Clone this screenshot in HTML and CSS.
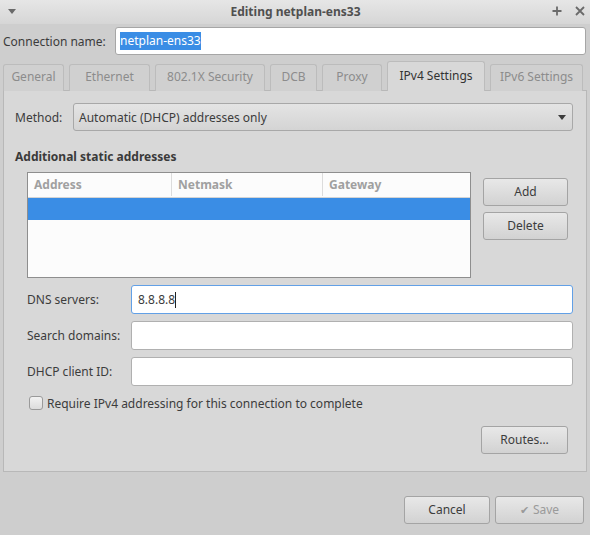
FILE: index.html
```html
<!DOCTYPE html>
<html>
<head>
<meta charset="utf-8">
<link rel="stylesheet" href="styles.css">
</head>
<body>
<div class="window">
  <div class="titlebar">
    <div class="tb-left"><span class="menu-arrow"></span></div>
    <div class="tb-title">Editing netplan-ens33</div>
    <div class="tb-right">
      <svg width="10" height="10" viewBox="0 0 10 10"><path d="M5 0.5v9M0.5 5h9" stroke="#6a6a6a" stroke-width="1.8"/></svg>
      <svg width="10" height="10" viewBox="0 0 10 10"><path d="M1 1l8 8M9 1l-8 8" stroke="#6a6a6a" stroke-width="1.8"/></svg>
    </div>
  </div>

  <div class="conn-row">
    <label class="conn-label">Connection name:</label>
    <div class="entry conn-entry"><span class="selected-text">netplan-ens33</span></div>
  </div>

  <div class="tabs">
    <div class="tab t-general">General</div>
    <div class="tab t-ethernet">Ethernet</div>
    <div class="tab t-8021x">802.1X Security</div>
    <div class="tab t-dcb">DCB</div>
    <div class="tab t-proxy">Proxy</div>
    <div class="tab active t-ipv4">IPv4 Settings</div>
    <div class="tab t-ipv6">IPv6 Settings</div>
  </div>

  <div class="panel">
    <div class="method-row">
      <span class="method-label">Method:</span>
      <div class="combo">
        <span>Automatic (DHCP) addresses only</span>
        <span class="combo-arrow"></span>
      </div>
    </div>

    <div class="section-title">Additional static addresses</div>

    <div class="addr-area">
      <div class="table">
        <div class="thead">
          <div class="th c1">Address</div>
          <div class="th c2">Netmask</div>
          <div class="th c3">Gateway</div>
        </div>
        <div class="row-selected"></div>
      </div>
      <div class="side-buttons">
        <div class="btn btn-side">Add</div>
        <div class="btn btn-side">Delete</div>
      </div>
    </div>

    <div class="form">
      <div class="form-row">
        <span class="form-label">DNS servers:</span>
        <div class="entry form-entry focused"><span>8.8.8.8</span><span class="caret"></span></div>
      </div>
      <div class="form-row">
        <span class="form-label">Search domains:</span>
        <div class="entry form-entry"></div>
      </div>
      <div class="form-row">
        <span class="form-label">DHCP client ID:</span>
        <div class="entry form-entry"></div>
      </div>
    </div>

    <div class="check-row">
      <span class="checkbox"></span>
      <span>Require IPv4 addressing for this connection to complete</span>
    </div>

    <div class="routes-row">
      <div class="btn btn-routes">Routes…</div>
    </div>
  </div>

  <div class="dialog-buttons">
    <div class="btn btn-cancel">Cancel</div>
    <div class="btn btn-save disabled"><span class="check">✔</span> Save</div>
  </div>
</div>
</body>
</html>
```

FILE: styles.css
```css
* { box-sizing: border-box; }

html, body {
  margin: 0;
  padding: 0;
}

body {
  width: 590px;
  height: 535px;
  overflow: hidden;
  background: #cecece;
  font-family: "Noto Sans", "Open Sans", sans-serif;
  font-size: 12px;
  color: #3c3c3c;
}

.window {
  width: 590px;
  height: 535px;
  display: flex;
  flex-direction: column;
}

/* Title bar */
.titlebar {
  height: 24px;
  flex: none;
  display: grid;
  grid-template-columns: 1fr auto 1fr;
  align-items: center;
  padding: 0 7px 2px 8px;
  background: linear-gradient(#e6e6e6, #d6d6d6);
}
.tb-left { display: flex; align-items: center; }
.menu-arrow {
  width: 0; height: 0;
  border-left: 4px solid transparent;
  border-right: 4px solid transparent;
  border-top: 5px solid #6a6a6a;
}
.tb-title {
  font-weight: bold;
  color: #505050;
}
.tb-right {
  display: flex;
  justify-content: flex-end;
  gap: 13px;
  padding-right: 0;
  margin-right: -2px;
}

/* connection name */
.conn-row {
  display: flex;
  align-items: center;
  margin-top: 3px;
  padding: 0 4px 0 3px;
  height: 28px;
  flex: none;
}
.conn-label {
  width: 112px;
  flex: none;
}
.entry {
  background: #ffffff;
  border: 1px solid #a6a6a6;
  border-radius: 3px;
  height: 28px;
  display: flex;
  align-items: center;
  padding-left: 4px;
}
.conn-entry {
  flex: 1;
}
.selected-text {
  background: #3a8de5;
  color: #ffffff;
  line-height: 18px;
}

/* tabs */
.tabs {
  display: flex;
  gap: 5px;
  margin-top: 7px;
  padding-left: 3px;
  height: 29px;
  align-items: flex-end;
  flex: none;
  position: relative;
  z-index: 1;
  margin-bottom: -1px;
}
.tab {
  height: 27px;
  border: 1px solid #bcbcbc;
  border-bottom: none;
  border-radius: 3px 3px 0 0;
  background: #d0d0d0;
  color: #8c8c8c;
  display: flex;
  align-items: center;
  justify-content: center;
  padding-bottom: 4px;
}
.tab.active {
  height: 30px;
  background: #d8d8d8;
  color: #333333;
  padding-bottom: 2px;
}
.t-general { width: 61px; }
.t-ethernet { width: 81px; }
.t-8021x { width: 110px; }
.t-dcb { width: 47px; }
.t-proxy { width: 60px; }
.t-ipv4 { width: 98px; }
.t-ipv6 { width: 93px; }

/* notebook panel */
.panel {
  margin: 0 3px;
  height: 382px;
  flex: none;
  background: #d8d8d8;
  border: 1px solid #b8b8b8;
  padding: 12px 13px 0 11px;
  display: flex;
  flex-direction: column;
}

.method-row {
  display: flex;
  align-items: center;
  height: 28px;
}
.method-label {
  width: 58px;
  flex: none;
}
.combo {
  flex: 1;
  height: 28px;
  border: 1px solid #a8a8a8;
  border-radius: 3px;
  background: linear-gradient(#e4e4e4, #d4d4d4);
  display: flex;
  align-items: center;
  justify-content: space-between;
  padding: 0 6px 0 5px;
}
.combo-arrow {
  width: 0; height: 0;
  border-left: 4px solid transparent;
  border-right: 4px solid transparent;
  border-top: 5px solid #3c3c3c;
}

.section-title {
  font-weight: bold;
  margin-top: 18px;
  line-height: 16px;
  color: #3a3a3a;
}

.addr-area {
  display: flex;
  gap: 12px;
  margin-top: 7px;
  padding-left: 12px;
}
.table {
  width: 444px;
  height: 106px;
  border: 1px solid #8e8e8e;
  background: #fcfcfc;
}
.thead {
  display: flex;
  height: 25px;
  border-bottom: 1px solid #d4d4d4;
  padding-bottom: 1px;
}
.th {
  font-weight: bold;
  color: #a0a0a0;
  display: flex;
  align-items: center;
  padding-left: 6px;
  border-right: 1px solid #dcdcdc;
}
.th.c1 { width: 144px; }
.th.c2 { width: 151px; }
.th.c3 { flex: 1; border-right: none; }
.row-selected {
  height: 22px;
  background: #3a8de5;
}
.side-buttons {
  display: flex;
  flex-direction: column;
  gap: 6px;
  padding-top: 6px;
}

.btn {
  border: 1px solid #a4a4a4;
  border-radius: 3px;
  background: linear-gradient(#e8e8e8, #d2d2d2);
  display: flex;
  align-items: center;
  justify-content: center;
  height: 28px;
  color: #3c3c3c;
  padding-bottom: 1px;
}
.btn-side { width: 85px; }

.form {
  display: flex;
  flex-direction: column;
  gap: 7px;
  margin-top: 7px;
  padding-left: 12px;
}
.form-row {
  display: flex;
  align-items: center;
}
.form-label {
  width: 104px;
  flex: none;
}
.form-entry {
  flex: 1;
  height: 29px;
  padding-left: 6px;
  border-color: #b0b0b0;
}
.form-entry.focused {
  border-color: #62a0e6;
}
.caret {
  width: 1px;
  height: 16px;
  background: #222;
}

.check-row {
  display: flex;
  align-items: center;
  gap: 4px;
  margin-top: 8px;
  padding-left: 14px;
  height: 18px;
}
.checkbox {
  width: 14px;
  height: 14px;
  border: 1px solid #9a9a9a;
  border-radius: 3px;
  background: linear-gradient(#f2f2f2, #dcdcdc);
}

.routes-row {
  display: flex;
  justify-content: flex-end;
  margin-top: 14px;
  padding-right: 5px;
}
.btn-routes { width: 87px; }

.dialog-buttons {
  display: flex;
  justify-content: flex-end;
  gap: 5px;
  margin-top: 24px;
  padding-right: 6px;
}
.btn-cancel { width: 86px; }
.btn-save { width: 89px; }
.btn.disabled { color: #9a9a9a; }
.check { font-size: 11px; margin-right: 4px; }
```
